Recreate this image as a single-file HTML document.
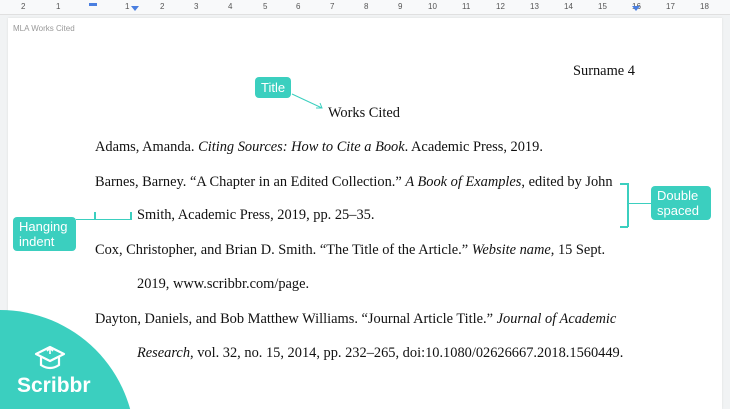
<!DOCTYPE html>
<html style="width:730px;height:409px;overflow:hidden"><head><style>
*{margin:0;padding:0;box-sizing:border-box}
body{width:730px;height:409px;overflow:hidden;background:#f1f3f4;position:relative;font-family:"Liberation Serif",serif}
.ruler{position:absolute;left:0;top:0;width:730px;height:15px;background:#f8f9fa;border-bottom:1px solid #e0e0e0;font:8px "Liberation Sans",sans-serif;color:#555}
.ruler span{position:absolute;top:2px}
.page{position:absolute;left:8px;top:18px;width:714px;height:391px;background:#fff;box-shadow:0 0 2px #ddd}
.t{position:absolute;font-size:14.4px;color:#111;white-space:nowrap}
.lbl{position:absolute;background:#3bcfbf;color:#fff;font:13px "Liberation Sans",sans-serif;border-radius:4px;padding:2px 6px;line-height:15px}
.ln{position:absolute;background:#3bcfbf}
</style></head><body>
<div class="ruler">
<span style="left:21px">2</span><span style="left:56px">1</span>
<div style="position:absolute;left:89px;top:3px;width:8px;height:3px;background:#4a7fe0"></div>
<span style="left:125px">1</span>
<div style="position:absolute;left:131px;top:6px;width:0;height:0;border-left:4px solid transparent;border-right:4px solid transparent;border-top:5px solid #4a7fe0"></div>
<span style="left:160px">2</span><span style="left:194px">3</span><span style="left:228px">4</span><span style="left:263px">5</span><span style="left:296px">6</span><span style="left:330px">7</span><span style="left:364px">8</span><span style="left:398px">9</span><span style="left:428px">10</span><span style="left:462px">11</span><span style="left:496px">12</span><span style="left:530px">13</span><span style="left:564px">14</span><span style="left:598px">15</span><span style="left:632px">16</span><span style="left:666px">17</span><span style="left:700px">18</span>
<div style="position:absolute;left:632px;top:6px;width:0;height:0;border-left:4px solid transparent;border-right:4px solid transparent;border-top:5px solid #4a7fe0"></div>
</div>
<div class="page">
<div style="position:absolute;left:5px;top:6px;font:8px 'Liberation Sans',sans-serif;color:#999">MLA Works Cited</div>
</div>
<div class="t" style="left:573px;top:63px">Surname 4</div>
<div class="t" style="left:328px;top:105px">Works Cited</div>
<div class="t" style="left:95px;top:139px">Adams, Amanda. <i>Citing Sources: How to Cite a Book</i>. Academic Press, 2019.</div>
<div class="t" style="left:95px;top:174px">Barnes, Barney. “A Chapter in an Edited Collection.” <i>A Book of Examples</i>, edited by John</div>
<div class="t" style="left:137px;top:207px">Smith, Academic Press, 2019, pp. 25–35.</div>
<div class="t" style="left:95px;top:242px">Cox, Christopher, and Brian D. Smith. “The Title of the Article.” <i>Website name</i>, 15 Sept.</div>
<div class="t" style="left:137px;top:276px">2019, www.scribbr.com/page.</div>
<div class="t" style="left:95px;top:311px">Dayton, Daniels, and Bob Matthew Williams. “Journal Article Title.” <i>Journal of Academic</i></div>
<div class="t" style="left:137px;top:345px"><i>Research</i>, vol. 32, no. 15, 2014, pp. 232–265, doi:10.1080/02626667.2018.1560449.</div>

<div class="lbl" style="left:255px;top:77px;padding:3px 6px">Title</div>
<svg style="position:absolute;left:290px;top:90px" width="40" height="22"><line x1="2" y1="4" x2="32" y2="18" stroke="#3bcfbf" stroke-width="1"/><polyline points="26,18 32,18 30,13" fill="none" stroke="#3bcfbf"/></svg>

<div class="lbl" style="left:651px;top:186px;width:60px">Double spaced</div>
<div class="ln" style="left:620px;top:183px;width:8px;height:2px"></div>
<div class="ln" style="left:627px;top:183px;width:2px;height:44px"></div>
<div class="ln" style="left:620px;top:226px;width:8px;height:2px"></div>
<div class="ln" style="left:628px;top:203px;width:24px;height:1px"></div>

<div class="lbl" style="left:13px;top:217px;width:63px">Hanging indent</div>
<div class="ln" style="left:76px;top:219px;width:55px;height:1px"></div>
<div class="ln" style="left:94px;top:212px;width:2px;height:8px"></div>
<div class="ln" style="left:130px;top:212px;width:2px;height:8px"></div>

<svg style="position:absolute;left:0;top:305px" width="140" height="104" viewBox="0 0 140 104"><circle cx="0" cy="140" r="135" fill="#3bcfbf"/></svg>
<svg style="position:absolute;left:32px;top:344px" width="40" height="30" viewBox="0 0 40 30"><path d="M4 10 L18 3 L32 10 L18 17 Z" fill="none" stroke="#fff" stroke-width="2.2" stroke-linejoin="round"/><path d="M9 13 V21 Q18 27 27 21 V13" fill="none" stroke="#fff" stroke-width="2.2"/><path d="M18 10 V5 M15 7 L18 4 L21 7" fill="none" stroke="#fff" stroke-width="1.6"/></svg>
<div style="position:absolute;left:17px;top:374px;font:bold 21px 'Liberation Sans',sans-serif;color:#fff;line-height:24px">Scribbr</div>
</body></html>
